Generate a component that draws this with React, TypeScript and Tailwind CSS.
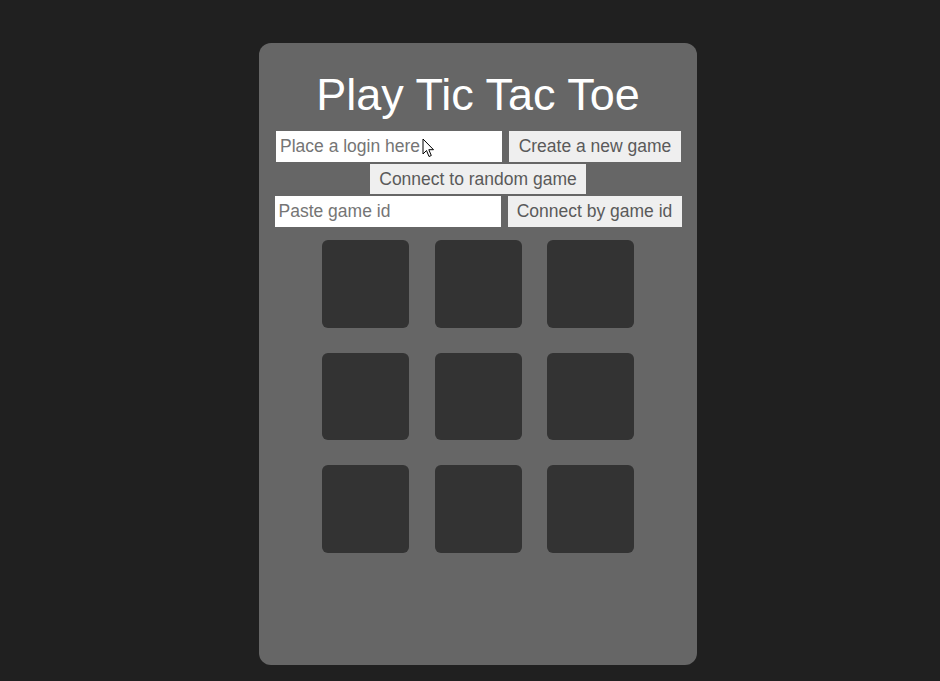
import React from 'react';

const cells = Array.from({ length: 9 }, (_, i) => i);

function Cursor() {
  return (
    <svg
      className="absolute left-[422px] top-[138px] pointer-events-none"
      width="13"
      height="20"
      viewBox="0 0 13 20"
    >
      <path
        d="M1 1 L1 16 L4.5 12.5 L7 18.5 L9.3 17.5 L6.8 11.7 L11.5 11.7 Z"
        fill="#ffffff"
        stroke="#000000"
        strokeWidth="1"
        strokeLinejoin="round"
      />
    </svg>
  );
}

export default function App() {
  return (
    <div className="relative min-h-screen w-full bg-[#202020] pt-[43px] font-['Liberation_Sans',Arial,sans-serif]">
      {/* game card */}
      <div className="ml-[259px] flex h-[622px] w-[438px] flex-col items-center rounded-[12px] bg-[#666666] pt-[26px]">
        <h1 className="text-[45px] leading-[52px] text-white">Play Tic Tac Toe</h1>

        <div className="mt-[10px] flex h-[31px] w-full justify-center gap-[7px] pl-px">
          <input
            className="h-full w-[226px] bg-white px-[4px] text-[17.5px] text-[#333] outline-none placeholder:text-[#757575]"
            placeholder="Place a login here"
          />
          <button className="h-full w-[172px] bg-[#efefef] text-[17.5px] text-[#5a5a5a]">
            Create a new game
          </button>
        </div>

        <div className="mt-[2px] flex h-[30px] w-full justify-center">
          <button className="h-full w-[216px] bg-[#efefef] text-[17.5px] text-[#5a5a5a]">
            Connect to random game
          </button>
        </div>

        <div className="mt-[2px] flex h-[31px] w-full justify-center gap-[7px]">
          <input
            className="h-full w-[226px] bg-white px-[4px] text-[17.5px] text-[#333] outline-none placeholder:text-[#757575]"
            placeholder="Paste game id"
          />
          <button className="h-full w-[174px] bg-[#efefef] text-[17.5px] text-[#5a5a5a]">
            Connect by game id
          </button>
        </div>

        {/* board */}
        <div className="mt-[13px] grid grid-cols-[87px_87px_87px] gap-x-[25.5px] gap-y-[25px]">
          {cells.map((c) => (
            <div key={c} className="h-[87.5px] w-[87px] rounded-[6px] bg-[#333333]" />
          ))}
        </div>
      </div>

      <Cursor />
    </div>
  );
}
